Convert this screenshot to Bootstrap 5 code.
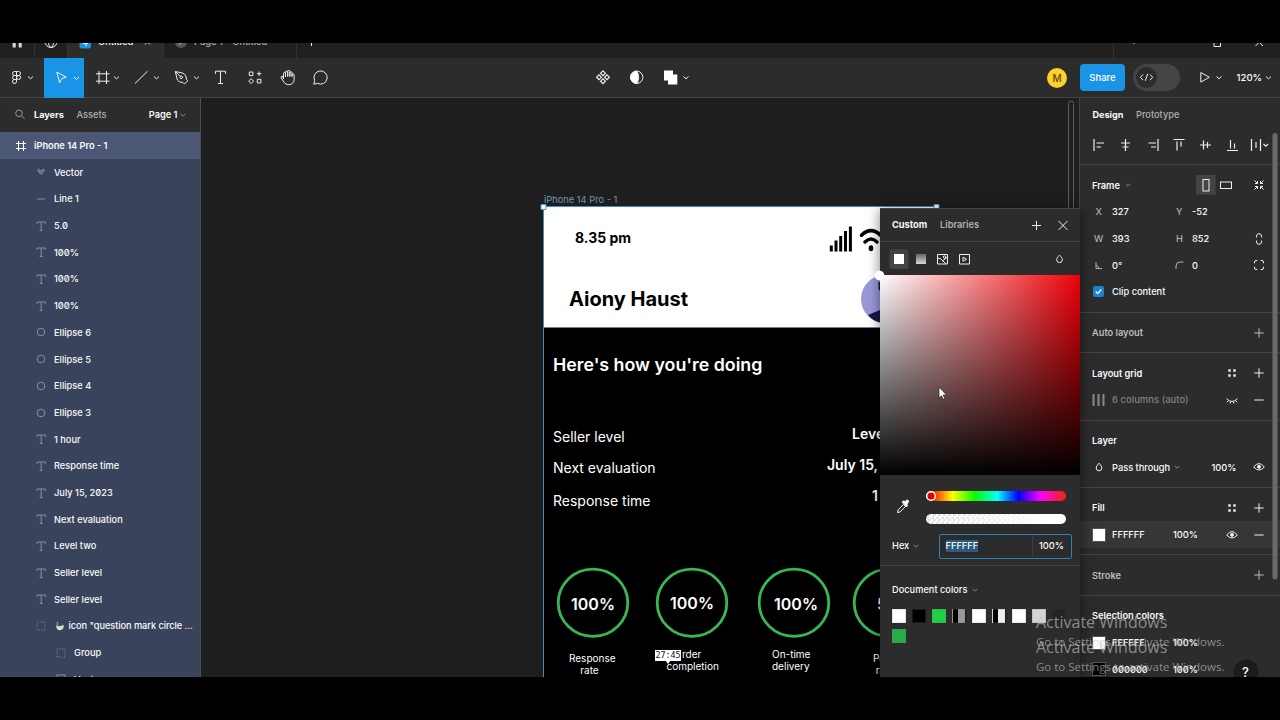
<!DOCTYPE html>
<html lang="en">
<head>
<meta charset="utf-8">
<title>Untitled – design editor</title>
<link href="https://cdn.jsdelivr.net/npm/bootstrap@5.3.0/dist/css/bootstrap.min.css" rel="stylesheet">
<script src="https://cdn.jsdelivr.net/npm/bootstrap@5.3.0/dist/js/bootstrap.bundle.min.js" defer></script>
<style>
:root{--ui:#2c2c2c;--line:#434343;--blue:#1a94e6}
body{width:1280px;height:720px;background:#000;overflow:hidden;font-family:Inter,"Liberation Sans",sans-serif;font-size:9.25px;line-height:1;color:#fafafa;font-weight:500}
svg{display:block;flex:none;overflow:visible;fill:none;stroke:#efefef;stroke-width:1}
.stage{margin-top:43px;height:634px;width:1280px;background:#1e1e1e}
.tabstrip{height:15px;background:#202020}
.tabstrip>div{height:33px;border-right:1px solid #333}
.toolbar{height:40px;background:var(--ui);border-bottom:1px solid var(--line)}
.share{width:45px;height:27px;border-radius:4px;background:var(--blue);color:#fff;font-size:9.5px;font-weight:500;padding:0;border:0;line-height:1}
.who{width:20px;height:20px;background:#fad12f;color:#5b4708;font-size:10px}
.devmode{width:47px;height:26.5px;border-radius:14px;background:#444}
.left-panel{width:201px;background:#39435c;border-right:1px solid #4a4f5e}
.left-head{height:34.3px;background:var(--ui);padding-bottom:1px}
.layer-row{height:26.7px;padding-left:34px}
.layer-row svg{stroke:#8790a8;width:14px;height:14px;margin:0 6.5px 0 -.5px}
.layer-row.top-row{background:#4c5776;padding-left:14px;font-weight:600}
.layer-row.top-row svg{stroke:#fff}
.layer-row.deep{padding-left:54px}
.zeros{font-feature-settings:"zero"}
.dim{color:#b0b0b0}
.right-panel{width:201.5px;background:var(--ui);border-left:1px solid var(--line)}
.sect{border-top:1px solid var(--line);padding:6.5px 0}
.prow{display:grid;grid-template-columns:32.5px 56px 24px 26.500px 27px 27px;height:26.67px;align-items:center}
.prow>*{grid-row:1}
.prow .ic{justify-self:center}
.prow .lead-ic{justify-self:center;margin-left:6px}
.prow .ttl{grid-column:1/5;padding-left:12.500px;font-weight:600}
.sw{width:14px;height:14px;background:#fff;border:1px solid #555}
.canvas-text{position:absolute;white-space:nowrap;line-height:1;color:#fff}
.picker{position:absolute;left:879.5px;top:208px;width:200px;height:469px;background:var(--ui);box-shadow:0 2px 12px rgba(0,0,0,.5);border-top:1px solid #444}
.sv{height:200px;background:linear-gradient(to bottom,transparent,#000),linear-gradient(to right,#fff,#ee0008)}
.hue{width:140px;height:10px;border-radius:5px;background:linear-gradient(to right,#f00 3%,#ff0 19%,#0f0 35%,#0ff 51%,#00f 66%,#f0f 82%,#f02030 96%)}
.alpha{width:140px;height:10px;border-radius:5px;background:linear-gradient(to right,rgba(255,255,255,.2),#fff 90%),repeating-conic-gradient(#d8d8d8 0 25%,#fff 0 50%) 0 0/5px 5px}
.hexbox{width:133px;height:25px;border:1.5px solid #2483c5;border-radius:2px}
.chips{display:grid;grid-template-columns:repeat(9,14px);gap:6px}
.chips i{height:14px;display:block;border:1px solid rgba(120,120,120,.2)}
.stamp{position:absolute;font-family:"Open Sans",sans-serif;font-weight:400;color:rgba(200,200,200,.62);white-space:nowrap;line-height:1}
</style>
</head>
<body>
<svg width="0" height="0" class="position-absolute">
<symbol id="T" viewBox="0 0 14 14"><path d="M3 4.8V3h8.4v1.8M7.2 3v8.4M5.6 11.4h3.2"/></symbol>
<symbol id="ell" viewBox="0 0 14 14"><circle cx="7" cy="7" r="3.8"/></symbol>
<symbol id="hash" viewBox="0 0 14 14"><path d="M4.5 2v10M9.5 2v10M2 4.5h10M2 9.5h10"/></symbol>
<symbol id="grp" viewBox="0 0 14 14"><rect x="3" y="3" width="8" height="8" stroke-dasharray="1 1.67"/></symbol>
<symbol id="vec" viewBox="0 0 14 14"><path d="M3.4 5.2l1.5-1.2L7 6l2.100-2 1.500 1.200L7 9.500zM4.600 5.300L7 7.600l2.400-2.300"/></symbol>
<symbol id="ln" viewBox="0 0 14 14"><path d="M3 7h8"/></symbol>
<symbol id="chev" viewBox="0 0 8 8"><path d="M1.700 2.900L4 5.200l2.300-2.300"/></symbol>
<symbol id="plus" viewBox="0 0 12 12"><path d="M6 1.300v9.400M1.300 6h9.400"/></symbol>
<symbol id="minus" viewBox="0 0 12 12"><path d="M1.300 6h9.400"/></symbol>
<symbol id="dots" viewBox="0 0 12 12"><path d="M2.300 3.500h2.400M7.300 3.500h2.400M2.300 8.500h2.400M7.300 8.500h2.400" stroke-width="2.400"/></symbol>
<symbol id="eye" viewBox="0 0 12 12"><path d="M.7 6Q6-.8 11.300 6 6 12 .7 6z"/><circle cx="6" cy="5.800" r="1.500" fill="#eee"/></symbol>
<symbol id="drop" viewBox="0 0 12 12"><path d="M6 2.200C4 4.500 3.200 5.500 3.200 7a2.800 2.800 0 0 0 5.600 0C8.800 5.500 8 4.500 6 2.200z"/></symbol>
</svg>

<main class="stage position-relative overflow-hidden">
 <div class="tabstrip d-flex align-items-end overflow-hidden">
  <div style="width:35px" class="d-flex align-items-center"><svg width="34" height="33" viewBox="0 24.500 34 33"><path d="M12.700 47v-8l4.500-4 4.500 4v8h-3v-4.500h-3V47z" fill="#ddd" stroke="none"/></svg></div>
  <div style="width:33px"><svg width="33" height="33" viewBox="35 24.500 33 33"><circle cx="51" cy="41" r="6"/><ellipse cx="51" cy="41" rx="2.600" ry="6"/><path d="M45 42h12"/></svg></div>
  <div style="width:96px;background:#2c2c2c" class="d-flex align-items-center"><svg width="30" height="33" viewBox="68 24.500 30 33"><rect x="79.500" y="36" width="11.500" height="12" rx="2" fill="#1a94e6" stroke="none"/><path d="M83 43h5M86 41v5"/></svg><span style="font-size:9.500px">Untitled</span><svg class="ms-auto me-2" width="14" height="33" viewBox="141 24.500 14 33"><path d="M145 39l5 5M150 39l-5 5"/></svg></div>
  <div style="width:133px" class="d-flex align-items-center dim"><svg width="30" height="33" viewBox="164 24.500 30 33"><circle cx="181" cy="41.500" r="6" fill="#555" stroke="none"/><path d="M179.500 39v5l4-2.500z" stroke="#999"/></svg><span style="font-size:9.400px">Page 1 - Untitled</span></div>
  <svg width="30" height="33" viewBox="297 24.500 30 33"><path d="M311.500 38v7.500M308 41.500h7"/></svg>
  <div style="width:787px"></div>
  <svg width="165" height="33" viewBox="1114 24.500 165 33"><path d="M1131 40l3 3 3-3M1214 40.500h6.500v5.500h-6.500zM1255.500 38l7.500 7.500M1263 38l-7.500 7.500"/></svg>
 </div>

 <nav class="toolbar d-flex align-items-center">
  <svg width="44" height="39" viewBox="0 58 44 39"><path d="M16.500 71.500h-2a2 2 0 0 0 0 4h2zh2a2 2 0 0 1 0 4h-2M16.500 75.500h-2a2 2 0 0 0 0 4h2zM16.500 79.500h-2a2 2 0 1 0 2 2zM16.500 75.500v4"/><circle cx="18.600" cy="77.500" r="2"/><path d="M28 76.500l2.500 2.300 2.500-2.300"/></svg>
  <svg style="background:#1a94e6" width="40" height="40" viewBox="44 57.500 40 40"><path d="M56.800 71.500l9.500 5.200-4.500 1.300-2.200 4.300z"/><path d="M74 76.500l2.500 2.300 2.500-2.300"/></svg>
  <svg width="40" height="39" viewBox="84 58 40 39"><path d="M99 71v13M106.500 71v13M96 73.800h13.500M96 81.200h13.500M114 76.500l2.500 2.300 2.500-2.300"/></svg>
  <svg width="40" height="39" viewBox="124 58 40 39"><path d="M135 83.500l12.500-12.300M154 76.500l2.500 2.300 2.500-2.300"/></svg>
  <svg width="40" height="39" viewBox="164 58 40 39"><path d="M175.300 71.500l7 1.500c2.600.7 4.200 3 4 6.200l1.500 1.600-3.500 3.100-1.500-1.500c-3.200 0-5.200-1.200-5.800-3.800zM175.300 71.500l4.900 4.900"/><circle cx="181.200" cy="77.300" r="1.300"/><path d="M194 76.500l2.500 2.300 2.500-2.300"/></svg>
  <svg width="33" height="39" viewBox="204 58 33 39"><path d="M215.500 73.800v-2.600h10v2.600M220.500 71.200V83.500M218 83.500h5"/></svg>
  <svg width="34" height="39" viewBox="237 58 34 39"><path d="M249.300 72h3.600v3.600h-3.600zM257.300 79.300h3.600v3.600h-3.600zM259.100 71.500v4.400M256.900 73.700h4.400M251.100 78.700l2.400 2.400-2.400 2.400-2.400-2.400z"/></svg>
  <svg width="33" height="39" viewBox="271 58 33 39"><path d="M283.500 79v-5.500c0-1.500 2-1.500 2 0v3.500-5c0-1.500 2.200-1.500 2.200 0v4.500-5c0-1.500 2.200-1.500 2.200 0v5-3.700c0-1.500 2.100-1.500 2.100 0v3.700-1.500c0-1.500 2.100-1.500 2.100 0v4.500c0 3-2.200 5.200-5.200 5.200-2.400 0-3.800-.8-4.800-2.500l-3-4.300c-.8-1.300.9-2.200 1.800-1.200z"/></svg>
  <svg width="33" height="39" viewBox="304 58 33 39"><path d="M313.800 84.200l.8-3.900a6.600 6.600 0 1 1 3 3.100z"/></svg>
  <svg style="margin-left:254px" width="24" height="39" viewBox="591 58 24 39"><path d="M603 70.800l2.400 2.400-2.400 2.400-2.400-2.400zM603 78.800l2.400 2.400-2.400 2.400-2.400-2.400zM599 74.800l2.400 2.400-2.400 2.400-2.400-2.400zM607 74.800l2.400 2.400-2.400 2.400-2.400-2.400z" stroke-width="1.200"/></svg>
  <svg style="margin-left:9px" width="26" height="39" viewBox="624 58 26 39"><circle cx="636.700" cy="77.300" r="6.200"/><path d="M636.700 71.100a6.200 6.200 0 0 0 0 12.400c2.600-3.800 2.600-8.600 0-12.400z" fill="#fff"/></svg>
  <svg style="margin-left:10px" width="34" height="39" viewBox="660 58 34 39"><path d="M664 70.500h9v4h4.300v10H668v-4h-4z" fill="#fff" stroke="none"/><path d="M683.500 76.500l2.500 2.300 2.500-2.300"/></svg>
  <span class="who rounded-circle d-flex align-items-center justify-content-center" style="margin-left:353px">M</span>
  <button class="share btn" style="margin-left:13px">Share</button>
  <span class="devmode" style="margin-left:8px"><svg width="47" height="27" viewBox="1132.500 64 47 27"><circle cx="1146" cy="77.300" r="10.500" fill="#2c2c2c" stroke="none"/><path d="M1142.500 74.500l-2.700 2.800 2.700 2.800M1149.500 74.500l2.700 2.800-2.700 2.800M1147.200 73.800l-2.400 7"/></svg></span>
  <svg width="56" height="39" viewBox="1179.500 58 56 39"><path d="M1200.300 72.500v9.600l8.500-4.800zM1216 76.500l2.500 2.300 2.500-2.300"/></svg>
  <span style="font-size:9.600px;width:26px;margin-left:.500px">120%</span>
  <svg width="10" height="39" viewBox="1261 58 10 39"><path d="M1264 76.500l2.500 2.300 2.500-2.300"/></svg>
 </nav>

 <div class="d-flex justify-content-between" style="height:579px">
  <aside class="left-panel overflow-hidden">
   <div class="left-head d-flex align-items-center">
    <svg width="34" height="33" viewBox="0 98 34 33" style="stroke:#999"><circle cx="19" cy="113.300" r="3.300"/><path d="M21.500 115.800l3.300 3.300"/></svg>
    <span style="font-weight:700;width:42.500px;font-size:9.100px">Layers</span><span class="dim">Assets</span>
    <span class="ms-auto fw-semibold">Page 1</span><svg style="stroke:#888;margin-right:13px;margin-left:1.500px" width="8" height="8"><use href="#chev"/></svg>
   </div>
   <div class="layer-row top-row d-flex align-items-center"><svg><use href="#hash"/></svg>iPhone 14 Pro - 1</div>
   <div class="layer-row d-flex align-items-center"><svg><use href="#vec"/></svg>Vector</div>
   <div class="layer-row d-flex align-items-center"><svg><use href="#ln"/></svg>Line 1</div>
   <div class="layer-row d-flex align-items-center zeros"><svg><use href="#T"/></svg>5.0</div>
   <div class="layer-row d-flex align-items-center zeros"><svg><use href="#T"/></svg>100%</div>
   <div class="layer-row d-flex align-items-center zeros"><svg><use href="#T"/></svg>100%</div>
   <div class="layer-row d-flex align-items-center zeros"><svg><use href="#T"/></svg>100%</div>
   <div class="layer-row d-flex align-items-center"><svg><use href="#ell"/></svg>Ellipse 6</div>
   <div class="layer-row d-flex align-items-center"><svg><use href="#ell"/></svg>Ellipse 5</div>
   <div class="layer-row d-flex align-items-center"><svg><use href="#ell"/></svg>Ellipse 4</div>
   <div class="layer-row d-flex align-items-center"><svg><use href="#ell"/></svg>Ellipse 3</div>
   <div class="layer-row d-flex align-items-center"><svg><use href="#T"/></svg>1 hour</div>
   <div class="layer-row d-flex align-items-center"><svg><use href="#T"/></svg>Response time</div>
   <div class="layer-row d-flex align-items-center zeros"><svg><use href="#T"/></svg>July 15, 2023</div>
   <div class="layer-row d-flex align-items-center"><svg><use href="#T"/></svg>Next evaluation</div>
   <div class="layer-row d-flex align-items-center"><svg><use href="#T"/></svg>Level two</div>
   <div class="layer-row d-flex align-items-center"><svg><use href="#T"/></svg>Seller level</div>
   <div class="layer-row d-flex align-items-center"><svg><use href="#T"/></svg>Seller level</div>
   <div class="layer-row d-flex align-items-center text-nowrap" style="letter-spacing:-.07px"><svg><use href="#grp"/></svg><svg style="width:11px;height:10px;margin-right:4px;stroke:none" viewBox="0 0 11 10"><path d="M2 1.200Q3.800 0 4.500 2L4 5H2.500L3 2.500z" fill="#7da04a"/><path d="M2.200 4.500Q5 6 9.800 4 10 9 6 9.300 2 9 2.200 4.500z" fill="#dcdccb"/></svg>icon "question mark circle ...</div>
   <div class="layer-row deep d-flex align-items-center"><svg><use href="#grp"/></svg>Group</div>
   <div class="layer-row deep d-flex align-items-center"><svg viewBox="0 0 14 14"><rect x="3" y="3" width="8" height="8"/></svg>Vector</div>
  </aside>

  <aside class="right-panel overflow-hidden">
   <div class="d-flex align-items-center" style="height:33px;padding-left:13px"><span style="font-weight:700;width:43.500px;font-size:9.100px">Design</span><span class="dim">Prototype</span></div>
   <svg width="200" height="33" viewBox="1080 131 200 33"><path d="M1094 139v12M1096.500 143h7.500M1096.500 147h4.500M1125.500 139v12M1121 143h9M1122.500 147h6M1158 139v12M1148.500 143h7.500M1151 147h5M1173.500 139.500h11M1177 141.500v9M1181 141.500v5M1200 145h11M1203.500 140.500v9M1207.500 142v6M1227 150.500h11M1230.500 140v8.500M1234.500 143.500v5M1251.500 139v12M1256 142v6M1260.500 139v12M1263.500 144l2.300 2.200 2.300-2.200" stroke-width="1.200"/></svg>
   <section class="sect" style="padding-top:7px">
    <div class="prow"><span class="ttl d-flex align-items-center" style="grid-column:1/4">Frame<svg style="stroke:#888;margin-left:4px" width="8" height="8"><use href="#chev"/></svg></span>
     <svg class="ic" style="grid-column:4/6;margin-right:6px" width="50" height="26" viewBox="1191 172 50 26"><rect x="1196" y="175" width="19.500" height="19.500" fill="#444" stroke="none"/><rect x="1203" y="179.500" width="6" height="11.500"/><rect x="1220.500" y="182" width="11" height="6.500"/></svg>
     <svg class="ic" style="grid-column:6" width="14" height="14" viewBox="1252 178 14 14"><path d="M1254.500 180.500l3 3v-2.500M1257.500 183.500h-2.500M1263.500 180.500l-3 3v-2.500M1260.500 183.500h2.500M1254.500 189.500l3-3v2.500M1257.500 186.500h-2.500M1263.500 189.500l-3-3v2.500M1260.500 186.500h2.500"/></svg></div>
    <div class="prow"><span class="lead-ic dim">X</span><span>327</span><span class="dim" style="padding-left:8px">Y</span><span>-52</span></div>
    <div class="prow"><span class="lead-ic dim">W</span><span>393</span><span class="dim" style="padding-left:8px">H</span><span>852</span><svg class="ic" style="grid-column:6" width="12" height="14" viewBox="0 0 12 14"><path d="M3.500 5.500V4.200a2.500 2.500 0 0 1 5 0v1.300M3.500 8.500v1.300a2.500 2.500 0 0 0 5 0V8.500"/></svg></div>
    <div class="prow"><svg class="lead-ic" width="12" height="12" viewBox="0 0 12 12" style="stroke:#b0b0b0"><path d="M3 3v6.500h6M3 6.500q2.500 0 3 3"/></svg><span>0°</span><svg class="ic" style="stroke:#b0b0b0" width="12" height="12" viewBox="0 0 12 12"><path d="M2 10V7q0-4 4-4h3.500"/></svg><span>0</span><svg class="ic" style="grid-column:6" width="12" height="12" viewBox="0 0 12 12"><path d="M1.500 4.300V3q0-1.500 1.500-1.500h1.300M7.700 1.500H9q1.500 0 1.500 1.500v1.300M10.500 7.700V9q0 1.500-1.500 1.500H7.700M4.300 10.500H3Q1.500 10.500 1.500 9V7.700"/></svg></div>
    <div class="prow"><svg class="lead-ic" width="11" height="11" viewBox="0 0 11 11"><rect width="11" height="11" rx="2" fill="#1a84cc" stroke="none"/><path d="M2.700 5.600l2 2 3.700-4" stroke-width="1.400"/></svg><span style="grid-column:2/6">Clip content</span></div>
   </section>
   <section class="sect"><div class="prow"><span class="ttl" style="color:#bcbcbc">Auto layout</span><svg class="ic" style="grid-column:6;stroke:#bbb" width="12" height="12"><use href="#plus"/></svg></div></section>
   <section class="sect">
    <div class="prow"><span class="ttl">Layout grid</span><svg class="ic" width="12" height="12"><use href="#dots"/></svg><svg class="ic" width="12" height="12"><use href="#plus"/></svg></div>
    <div class="prow"><svg class="lead-ic" width="13" height="12" viewBox="0 0 13 12" style="stroke:#888;stroke-width:2"><path d="M1.500 0v12M6.500 0v12M11.500 0v12"/></svg><span style="grid-column:2/5;color:#808080;font-size:9.500px">6 columns (auto)</span><svg class="ic" width="12" height="12" viewBox="0 0 12 12"><path d="M.5 4.500Q6 10.500 11.500 4.500M2.500 6.500L1 8.200M4.700 7.600L4 9.600M7.300 7.600L8 9.600M9.500 6.500L11 8.200"/></svg><svg class="ic" width="12" height="12"><use href="#minus"/></svg></div>
   </section>
   <section class="sect">
    <div class="prow"><span class="ttl">Layer</span></div>
    <div class="prow"><svg class="lead-ic" width="12" height="12"><use href="#drop"/></svg><span class="d-flex align-items-center text-nowrap" style="grid-column:2/4">Pass through<svg style="stroke:#888;margin-left:3px" width="8" height="8"><use href="#chev"/></svg></span><span style="grid-column:4/6;justify-self:end;padding-right:9px">100%</span><svg class="ic" width="12" height="12"><use href="#eye"/></svg></div>
   </section>
   <section class="sect">
    <div class="prow"><span class="ttl">Fill</span><svg class="ic" width="12" height="12"><use href="#dots"/></svg><svg class="ic" width="12" height="12"><use href="#plus"/></svg></div>
    <div class="prow" style="background:#363636"><span class="sw lead-ic"></span><span>FFFFFF</span><span style="grid-column:3/5;padding-left:5px">100%</span><svg class="ic" width="12" height="12"><use href="#eye"/></svg><svg class="ic" width="12" height="12"><use href="#minus"/></svg></div>
   </section>
   <section class="sect"><div class="prow"><span class="ttl" style="color:#bcbcbc">Stroke</span><svg class="ic" style="grid-column:6;stroke:#bbb" width="12" height="12"><use href="#plus"/></svg></div></section>
   <section class="sect">
    <div class="prow"><span class="ttl">Selection colors</span></div>
    <div class="prow"><span class="sw lead-ic"></span><span>FFFFFF</span><span style="grid-column:3/5;padding-left:5px">100%</span></div>
    <div class="prow zeros"><span class="sw lead-ic" style="background:#000"></span><span>000000</span><span style="grid-column:3/5;padding-left:5px">100%</span></div>
   </section>
  </aside>
 </div>
</main>

<!-- canvas: artboard with its selection outline -->
<svg class="position-absolute" style="left:0;top:0;clip-path:inset(0 0 43px 0)" width="1280" height="720" viewBox="0 0 1280 720">
 <rect x="1068.500" y="101" width="5" height="640" rx="2.500" stroke="#5c5c5c" fill="#1e1e1e"/>
 <rect x="544" y="207" width="392" height="520" fill="#000" stroke="none"/>
 <rect x="544" y="207" width="392" height="120.500" fill="#fff" stroke="none"/>
 <path d="M543.500 720V206.500H936.500" stroke="#3f8fc0"/>
 <path d="M541 204.500h5v5h-5zM934 204.500h5v5h-5z" fill="#fff" stroke="#3f9ad6"/>
 <path d="M831.300 245.500v6M836 240.500v11M840.700 236v15.500M845.500 231v20.500M850.400 226.500v25" stroke="#000" stroke-width="3"/>
 <path d="M861.500 235.200q9.500-9 19 0M865 242q6-6 12 0" stroke="#000" stroke-width="3.500" stroke-linecap="round"/><ellipse cx="871" cy="248.200" rx="2.300" ry="3" fill="#000" stroke="none"/>
 <circle cx="885" cy="299" r="24" fill="#9b98d8" stroke="none"/><path d="M868 315l12-5v12.500q-7-1.500-12-7.500z" fill="#14184a" stroke="none"/><path d="M878.500 282h2v10l-2-3z" fill="#1a1a3a" stroke="none"/>
 <g stroke="#38b854" stroke-width="2.800"><ellipse cx="593" cy="602.700" rx="34.800" ry="33.600"/><ellipse cx="692" cy="602.700" rx="34.800" ry="33.600"/><ellipse cx="794" cy="602.700" rx="34.800" ry="33.600"/><ellipse cx="889" cy="602.700" rx="34.800" ry="33.600"/></g>
</svg>
<div class="position-absolute overflow-hidden" style="left:0;top:0;width:1280px;height:677px">
 <span class="canvas-text" style="left:544px;top:195px;font-size:9.300px;font-weight:400;color:#6f97b4">iPhone 14 Pro - 1</span>
 <span class="canvas-text" style="left:575px;top:231px;font-size:14px;font-weight:700;color:#000">8.35 pm</span>
 <span class="canvas-text" style="left:569px;top:289px;font-size:20px;font-weight:700;color:#000">Aiony Haust</span>
 <span class="canvas-text" style="left:553px;top:356px;font-size:17.800px;font-weight:600">Here's how you're doing</span>
 <span class="canvas-text" style="left:553px;top:430px;font-size:14px;font-weight:400">Seller level</span>
 <span class="canvas-text" style="left:553px;top:461px;font-size:14px;font-weight:400">Next evaluation</span>
 <span class="canvas-text" style="left:553px;top:494px;font-size:14px;font-weight:400">Response time</span>
 <span class="canvas-text" style="left:852px;top:427px;font-size:14px;font-weight:600">Level two</span>
 <span class="canvas-text" style="left:827px;top:458px;font-size:14px;font-weight:600">July 15, 2023</span>
 <span class="canvas-text" style="left:872px;top:489px;font-size:14px;font-weight:600">1 hour</span>
 <span class="canvas-text" style="left:571px;top:596px;font-size:16px;font-weight:600">100%</span>
 <span class="canvas-text" style="left:670px;top:595px;font-size:16px;font-weight:600">100%</span>
 <span class="canvas-text" style="left:774px;top:596px;font-size:16px;font-weight:600">100%</span>
 <span class="canvas-text" style="left:877px;top:596px;font-size:16px;font-weight:600">5.0</span>
 <span class="canvas-text text-center" style="left:569px;top:652px;font-size:10px;font-weight:400;line-height:12px">Response<br>rate&nbsp;&nbsp;</span>
 <span class="canvas-text" style="left:666.500px;top:648px;font-size:10px;font-weight:400;line-height:12px"><span style="padding-left:15.500px">rder</span><br>completion</span>
 <span class="canvas-text" style="left:772px;top:648px;font-size:10px;font-weight:400;line-height:12px">On-time<br>delivery</span>
 <span class="canvas-text" style="left:873px;top:652px;font-size:10px;font-weight:400;line-height:12px">Positive<br>&nbsp;rating</span>
 <svg class="position-absolute" style="left:664px;top:660px" width="8" height="6"><path d="M1 0h6L4 4z" fill="#fff" stroke="none"/></svg>
 <span class="canvas-text text-center" style="left:655px;top:650px;width:26px;height:11px;background:#fff;color:#111;font:8.400px/11px 'DejaVu Sans Mono',monospace">27:45</span>

 <section class="picker">
  <div class="d-flex align-items-center" style="height:33px;padding-left:12.500px;border-bottom:1px solid #434343"><span style="font-weight:700;width:48px">Custom</span><span class="dim fw-semibold">Libraries</span>
   <svg width="70" height="33" class="ms-auto" viewBox="1010 208.500 70 33"><path d="M1036.500 220.500v9M1032 225h9M1058.500 220.500l9 9M1067.500 220.500l-9 9"/></svg></div>
  <svg width="200" height="33" viewBox="880 242 200 33"><rect x="889.500" y="249.500" width="19" height="19.500" rx="2" fill="#444" stroke="none"/><rect x="894" y="254" width="10" height="10" fill="#fff" stroke="none"/><linearGradient id="g" x2="0" y2="1"><stop stop-color="#666"/><stop offset="1" stop-color="#d8d8d8"/></linearGradient><rect x="916" y="254" width="10" height="10" fill="url(#g)" stroke="none"/><path d="M937.500 254.500h10v9.500h-10zM937.500 258l3.500 1 5 5M942.500 261l5-4"/><circle cx="944.500" cy="257" r="1.200"/><path d="M959.500 254.500h10v9.500h-10zM963 257.200v4l3.500-2z"/><path d="M1059.500 255.200c-2 2-2.800 3-2.800 4.600a2.800 2.800 0 0 0 5.600 0c0-1.600-.8-2.600-2.800-4.600z"/></svg>
  <div class="sv"></div>
  <div class="d-flex" style="height:62px;padding:15.500px 14px 0 13.500px">
   <svg width="33" height="34" viewBox="893 491 33 34"><path d="M897.500 512.500l.5-2.500 5.500-5.500 2 2-5.500 5.500z"/><path d="M902 502l1.500-1 1.500.5 2-1.500q2 0 1.500 2l-1.500 2 .5 1.500-1 1.500z" fill="#fff"/></svg>
   <div><div class="hue"></div><div class="alpha" style="margin-top:13.500px"></div></div>
  </div>
  <div class="d-flex align-items-center" style="padding-left:12.500px;height:18px"><span style="width:17px">Hex</span><svg style="stroke:#888;margin-left:3px;margin-right:19px" width="8" height="8"><use href="#chev"/></svg>
   <div class="hexbox d-flex align-items-center"><span style="background:#2c5b80;margin-left:5.500px;padding:1px 0">FFFFFF</span><span class="ms-auto d-flex align-items-center" style="height:22px;width:39px;border-left:1px solid #3d3d3d;padding-left:6px">100%</span></div></div>
  <div style="margin-top:10px;border-top:1px solid #434343;padding:14.500px 12.500px 0"><div class="d-flex align-items-center" style="height:18px">Document colors<svg style="stroke:#888;margin-left:4px" width="8" height="8"><use href="#chev"/></svg></div>
   <div class="chips" style="margin-top:10.500px"><i style="background:#fff"></i><i style="background:#000"></i><i style="background:#1fcf46"></i><i style="background:linear-gradient(90deg,#000 45%,#999 45%)"></i><i style="background:#fff"></i><i style="background:linear-gradient(90deg,#000 42%,#eee 42%)"></i><i style="background:#fff"></i><i style="background:#d4d4d4"></i><i style="background:#242424;border-color:#282828"></i><i style="background:#26ad46"></i></div></div>
 </section>
 <svg class="position-absolute" style="left:0;top:0" width="1280" height="720"><circle cx="879.500" cy="275.500" r="4.800" fill="#fff" stroke="none"/><circle cx="931" cy="496" r="4.300" fill="#e00000" stroke="#fff" stroke-width="1.500"/><path d="M939 387v11l2.500-2.300 1.600 3.600 1.700-.8-1.600-3.500h3.400z" fill="#fff" stroke="#222" stroke-width=".7"/>
  <rect x="1272.500" y="133" width="5" height="446.500" rx="2.500" fill="#6a6a6a" stroke="none"/><circle cx="1246" cy="672" r="12.500" fill="#1c1c1c" stroke="none"/></svg>
 <span class="canvas-text" style="left:1242px;top:665.500px;font-size:13px;font-weight:500">?</span>
 <span class="stamp" style="left:1036px;top:614px;font-size:16px">Activate Windows</span>
 <span class="stamp" style="left:1036px;top:636px;font-size:11.500px">Go to Settings to activate Windows.</span>
 <span class="stamp" style="left:1036px;top:639px;font-size:16px">Activate Windows</span>
 <span class="stamp" style="left:1036px;top:661px;font-size:11.500px">Go to Settings to activate Windows.</span>
</div>
</body>
</html>
